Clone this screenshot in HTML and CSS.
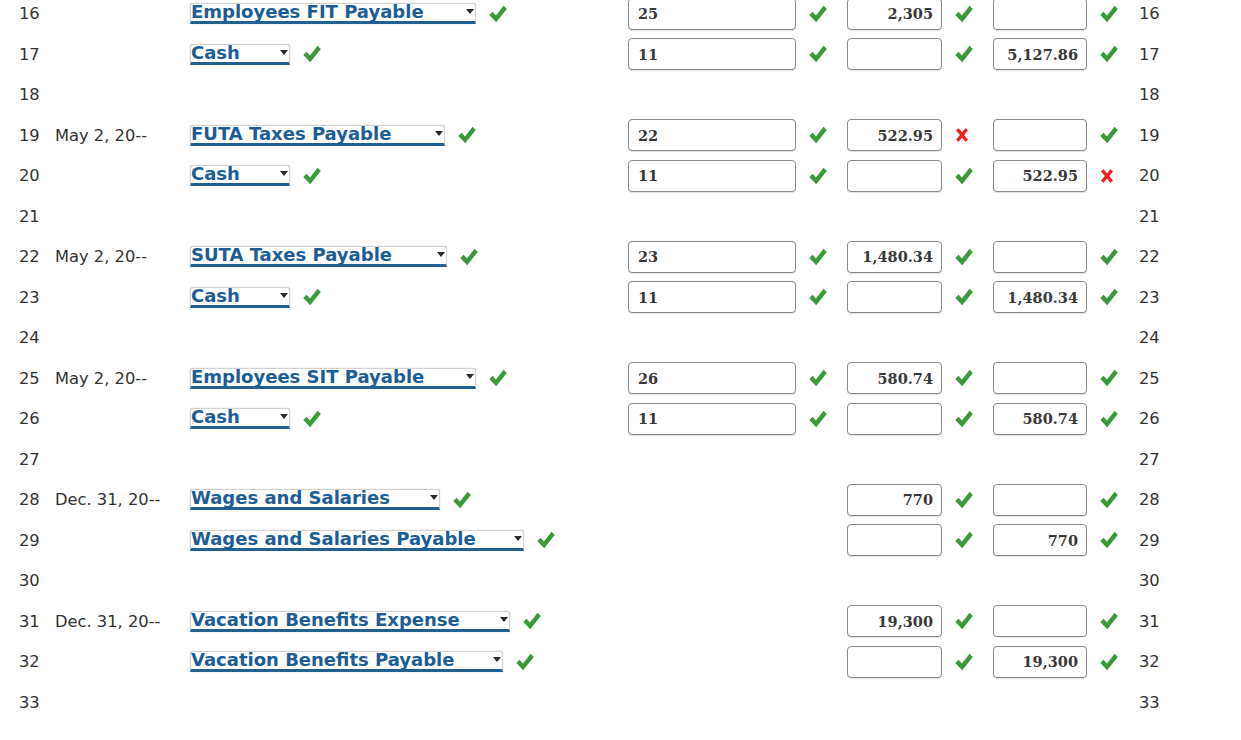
FILE: index.html
```html
<!DOCTYPE html>
<html>
<head>
<meta charset="utf-8">
<link rel="stylesheet" href="styles.css">
</head>
<body>
<svg width="0" height="0" class="defs">
  <defs>
    <symbol id="ok" viewBox="0 0 18 18"><path d="M0.3 9.9 L3.6 6.7 L6.9 10.6 L14.6 0.8 L17.8 3.9 L7.2 17.2 Z" fill="#3a9a3a"/></symbol>
    <symbol id="bad" viewBox="0 0 12 14"><path d="M1.3 1.2 L10.7 12.8 M10.7 1.2 L1.3 12.8" stroke="#f21d1d" stroke-width="3.4" stroke-linecap="butt" fill="none"/></symbol>
  </defs>
</svg>
<div class="sheet">
  <div class="row">
    <div class="c-ln">16</div><div class="c-date"></div>
    <div class="c-acct"><span class="sel w286"><span class="sel-t">Employees FIT Payable</span><span class="caret"></span></span><svg class="ck"><use href="#ok"/></svg></div>
    <div class="c-ref"><input class="in in-ref" value="25" readonly><svg class="ck"><use href="#ok"/></svg></div>
    <div class="c-dr"><input class="in in-dr" value="2,305" readonly><svg class="ck"><use href="#ok"/></svg></div>
    <div class="c-cr"><input class="in in-cr" value="" readonly><svg class="ck"><use href="#ok"/></svg></div>
    <div class="c-rn">16</div>
  </div>
  <div class="row">
    <div class="c-ln">17</div><div class="c-date"></div>
    <div class="c-acct"><span class="sel w100"><span class="sel-t">Cash</span><span class="caret"></span></span><svg class="ck"><use href="#ok"/></svg></div>
    <div class="c-ref"><input class="in in-ref" value="11" readonly><svg class="ck"><use href="#ok"/></svg></div>
    <div class="c-dr"><input class="in in-dr" value="" readonly><svg class="ck"><use href="#ok"/></svg></div>
    <div class="c-cr"><input class="in in-cr" value="5,127.86" readonly><svg class="ck"><use href="#ok"/></svg></div>
    <div class="c-rn">17</div>
  </div>
  <div class="row">
    <div class="c-ln">18</div><div class="c-date"></div><div class="c-acct"></div><div class="c-ref"></div><div class="c-dr"></div><div class="c-cr"></div>
    <div class="c-rn">18</div>
  </div>
  <div class="row">
    <div class="c-ln">19</div><div class="c-date">May 2, 20--</div>
    <div class="c-acct"><span class="sel w255"><span class="sel-t">FUTA Taxes Payable</span><span class="caret"></span></span><svg class="ck"><use href="#ok"/></svg></div>
    <div class="c-ref"><input class="in in-ref" value="22" readonly><svg class="ck"><use href="#ok"/></svg></div>
    <div class="c-dr"><input class="in in-dr" value="522.95" readonly><svg class="x"><use href="#bad"/></svg></div>
    <div class="c-cr"><input class="in in-cr" value="" readonly><svg class="ck"><use href="#ok"/></svg></div>
    <div class="c-rn">19</div>
  </div>
  <div class="row">
    <div class="c-ln">20</div><div class="c-date"></div>
    <div class="c-acct"><span class="sel w100"><span class="sel-t">Cash</span><span class="caret"></span></span><svg class="ck"><use href="#ok"/></svg></div>
    <div class="c-ref"><input class="in in-ref" value="11" readonly><svg class="ck"><use href="#ok"/></svg></div>
    <div class="c-dr"><input class="in in-dr" value="" readonly><svg class="ck"><use href="#ok"/></svg></div>
    <div class="c-cr"><input class="in in-cr" value="522.95" readonly><svg class="x"><use href="#bad"/></svg></div>
    <div class="c-rn">20</div>
  </div>
  <div class="row">
    <div class="c-ln">21</div><div class="c-date"></div><div class="c-acct"></div><div class="c-ref"></div><div class="c-dr"></div><div class="c-cr"></div>
    <div class="c-rn">21</div>
  </div>
  <div class="row">
    <div class="c-ln">22</div><div class="c-date">May 2, 20--</div>
    <div class="c-acct"><span class="sel w257"><span class="sel-t">SUTA Taxes Payable</span><span class="caret"></span></span><svg class="ck"><use href="#ok"/></svg></div>
    <div class="c-ref"><input class="in in-ref" value="23" readonly><svg class="ck"><use href="#ok"/></svg></div>
    <div class="c-dr"><input class="in in-dr" value="1,480.34" readonly><svg class="ck"><use href="#ok"/></svg></div>
    <div class="c-cr"><input class="in in-cr" value="" readonly><svg class="ck"><use href="#ok"/></svg></div>
    <div class="c-rn">22</div>
  </div>
  <div class="row">
    <div class="c-ln">23</div><div class="c-date"></div>
    <div class="c-acct"><span class="sel w100"><span class="sel-t">Cash</span><span class="caret"></span></span><svg class="ck"><use href="#ok"/></svg></div>
    <div class="c-ref"><input class="in in-ref" value="11" readonly><svg class="ck"><use href="#ok"/></svg></div>
    <div class="c-dr"><input class="in in-dr" value="" readonly><svg class="ck"><use href="#ok"/></svg></div>
    <div class="c-cr"><input class="in in-cr" value="1,480.34" readonly><svg class="ck"><use href="#ok"/></svg></div>
    <div class="c-rn">23</div>
  </div>
  <div class="row">
    <div class="c-ln">24</div><div class="c-date"></div><div class="c-acct"></div><div class="c-ref"></div><div class="c-dr"></div><div class="c-cr"></div>
    <div class="c-rn">24</div>
  </div>
  <div class="row">
    <div class="c-ln">25</div><div class="c-date">May 2, 20--</div>
    <div class="c-acct"><span class="sel w286"><span class="sel-t">Employees SIT Payable</span><span class="caret"></span></span><svg class="ck"><use href="#ok"/></svg></div>
    <div class="c-ref"><input class="in in-ref" value="26" readonly><svg class="ck"><use href="#ok"/></svg></div>
    <div class="c-dr"><input class="in in-dr" value="580.74" readonly><svg class="ck"><use href="#ok"/></svg></div>
    <div class="c-cr"><input class="in in-cr" value="" readonly><svg class="ck"><use href="#ok"/></svg></div>
    <div class="c-rn">25</div>
  </div>
  <div class="row">
    <div class="c-ln">26</div><div class="c-date"></div>
    <div class="c-acct"><span class="sel w100"><span class="sel-t">Cash</span><span class="caret"></span></span><svg class="ck"><use href="#ok"/></svg></div>
    <div class="c-ref"><input class="in in-ref" value="11" readonly><svg class="ck"><use href="#ok"/></svg></div>
    <div class="c-dr"><input class="in in-dr" value="" readonly><svg class="ck"><use href="#ok"/></svg></div>
    <div class="c-cr"><input class="in in-cr" value="580.74" readonly><svg class="ck"><use href="#ok"/></svg></div>
    <div class="c-rn">26</div>
  </div>
  <div class="row">
    <div class="c-ln">27</div><div class="c-date"></div><div class="c-acct"></div><div class="c-ref"></div><div class="c-dr"></div><div class="c-cr"></div>
    <div class="c-rn">27</div>
  </div>
  <div class="row">
    <div class="c-ln">28</div><div class="c-date">Dec. 31, 20--</div>
    <div class="c-acct"><span class="sel w250"><span class="sel-t">Wages and Salaries</span><span class="caret"></span></span><svg class="ck"><use href="#ok"/></svg></div>
    <div class="c-ref"></div>
    <div class="c-dr"><input class="in in-dr" value="770" readonly><svg class="ck"><use href="#ok"/></svg></div>
    <div class="c-cr"><input class="in in-cr" value="" readonly><svg class="ck"><use href="#ok"/></svg></div>
    <div class="c-rn">28</div>
  </div>
  <div class="row">
    <div class="c-ln">29</div><div class="c-date"></div>
    <div class="c-acct"><span class="sel w334"><span class="sel-t">Wages and Salaries Payable</span><span class="caret"></span></span><svg class="ck"><use href="#ok"/></svg></div>
    <div class="c-ref"></div>
    <div class="c-dr"><input class="in in-dr" value="" readonly><svg class="ck"><use href="#ok"/></svg></div>
    <div class="c-cr"><input class="in in-cr" value="770" readonly><svg class="ck"><use href="#ok"/></svg></div>
    <div class="c-rn">29</div>
  </div>
  <div class="row">
    <div class="c-ln">30</div><div class="c-date"></div><div class="c-acct"></div><div class="c-ref"></div><div class="c-dr"></div><div class="c-cr"></div>
    <div class="c-rn">30</div>
  </div>
  <div class="row">
    <div class="c-ln">31</div><div class="c-date">Dec. 31, 20--</div>
    <div class="c-acct"><span class="sel w320"><span class="sel-t">Vacation Benefits Expense</span><span class="caret"></span></span><svg class="ck"><use href="#ok"/></svg></div>
    <div class="c-ref"></div>
    <div class="c-dr"><input class="in in-dr" value="19,300" readonly><svg class="ck"><use href="#ok"/></svg></div>
    <div class="c-cr"><input class="in in-cr" value="" readonly><svg class="ck"><use href="#ok"/></svg></div>
    <div class="c-rn">31</div>
  </div>
  <div class="row">
    <div class="c-ln">32</div><div class="c-date"></div>
    <div class="c-acct"><span class="sel w313"><span class="sel-t">Vacation Benefits Payable</span><span class="caret"></span></span><svg class="ck"><use href="#ok"/></svg></div>
    <div class="c-ref"></div>
    <div class="c-dr"><input class="in in-dr" value="" readonly><svg class="ck"><use href="#ok"/></svg></div>
    <div class="c-cr"><input class="in in-cr" value="19,300" readonly><svg class="ck"><use href="#ok"/></svg></div>
    <div class="c-rn">32</div>
  </div>
  <div class="row">
    <div class="c-ln">33</div><div class="c-date"></div><div class="c-acct"></div><div class="c-ref"></div><div class="c-dr"></div><div class="c-cr"></div>
    <div class="c-rn">33</div>
  </div>
</div>
</body>
</html>
```

FILE: styles.css
```css
html, body {
  margin: 0;
  padding: 0;
  background: #fff;
  overflow: hidden;
}
.defs {
  display: block;
  width: 0;
  height: 0;
  overflow: hidden;
}
.sheet {
  margin-top: -6.75px;
  padding-left: 19px;
  font-family: "DejaVu Sans", Verdana, sans-serif;
  font-size: 16.3px;
  color: #333;
}
.row {
  display: flex;
  align-items: center;
  height: 40.5px;
}
.c-ln {
  width: 36px;
  flex: none;
}
.c-date {
  width: 135px;
  flex: none;
  white-space: nowrap;
}
.c-acct {
  width: 438px;
  flex: none;
  display: flex;
  align-items: center;
  gap: 13px;
}
.c-ref {
  width: 219px;
  flex: none;
  display: flex;
  align-items: center;
}
.c-dr {
  width: 146px;
  flex: none;
  display: flex;
  align-items: center;
}
.c-cr {
  width: 146px;
  flex: none;
  display: flex;
  align-items: center;
}
.c-rn {
  flex: none;
}
.sel {
  box-sizing: border-box;
  display: inline-flex;
  align-items: flex-start;
  height: 21px;
  background: #fff;
  border: 1px solid #d2d2d2;
  border-bottom: 3px solid #22608f;
  border-radius: 3px 3px 0 0;
  box-shadow: 0 0 1px rgba(0, 0, 0, 0.3);
  flex: none;
}
.sel-t {
  font-weight: bold;
  font-size: 18px;
  line-height: 18px;
  color: #1c5d96;
  white-space: nowrap;
  margin-top: -1px;
}
.caret {
  margin-left: auto;
  margin-right: 1px;
  margin-top: 5px;
  width: 0;
  height: 0;
  border-left: 4.5px solid transparent;
  border-right: 4.5px solid transparent;
  border-top: 5px solid #2b2b2b;
}
.w100 { width: 100px; }
.w250 { width: 250px; }
.w255 { width: 255px; }
.w257 { width: 257px; }
.w286 { width: 286px; }
.w313 { width: 313px; }
.w320 { width: 320px; }
.w334 { width: 334px; }
.ck {
  width: 18px;
  height: 18px;
  flex: none;
}
.x {
  width: 12px;
  height: 14px;
  margin-left: 1px;
  margin-right: 5px;
  flex: none;
}
.in {
  box-sizing: border-box;
  height: 32px;
  border: 1px solid #8a8a8a;
  border-radius: 4px;
  background: #fff;
  box-shadow: 0 1px 1px rgba(0, 0, 0, 0.12);
  font-family: "DejaVu Serif", Georgia, serif;
  font-weight: bold;
  font-size: 14.5px;
  color: #383838;
  padding: 0 8px 0 9px;
  margin: 0 13px 0 0;
  outline: none;
  flex: none;
}
.in-ref {
  width: 168px;
  text-align: left;
}
.in-dr {
  width: 95px;
  text-align: right;
}
.in-cr {
  width: 94px;
  text-align: right;
}
```
